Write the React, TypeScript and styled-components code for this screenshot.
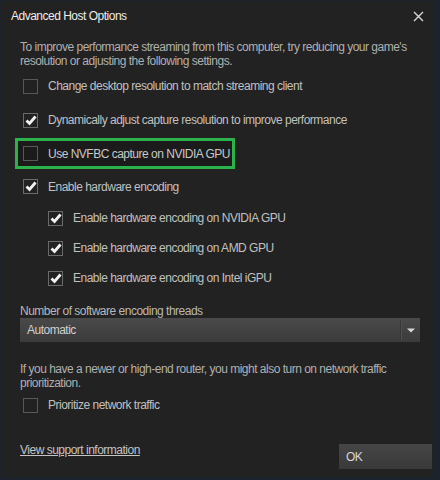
import React from "react";
import styled, { createGlobalStyle } from "styled-components";

const Global = createGlobalStyle`
  html, body { margin: 0; padding: 0; background: #1c232c; }
  body { font-family: "Liberation Sans", Arial, sans-serif; }
  * { box-sizing: border-box; }
`;

const Window = styled.div`
  width: 431px;
  height: 476px;
  margin: 1px 7px 3px 2px;
  background: #222222;
  display: flex;
  flex-direction: column;
  font-size: 12px;
  letter-spacing: -0.5px;
  color: #b4b4b4;
  overflow: hidden;
`;

const TitleBar = styled.div`
  flex: none;
  height: 30px;
  display: flex;
  align-items: center;
  justify-content: space-between;
  padding: 0 8px 0 9px;
  color: #ececec;
  font-size: 12px;
`;

const Close = styled.div`
  width: 14px;
  height: 14px;
  display: flex;
  align-items: center;
  justify-content: center;
`;

const Body = styled.div`
  flex: 1;
  display: flex;
  flex-direction: column;
  padding: 9px 0 0 18px;
`;

const Para = styled.p`
  margin: 0;
  line-height: 14px;
  width: 405px;
  color: #b0b0b0;
`;

const Row = styled.div<{ $indent?: boolean; $h: number }>`
  flex: none;
  display: flex;
  align-items: center;
  height: ${(p) => p.$h}px;
  padding-left: ${(p) => (p.$indent ? 28 : 3)}px;
  color: #c0c0c0;
`;

const Highlight = styled.div`
  flex: none;
  display: flex;
  align-items: center;
  width: 220px;
  height: 31px;
  margin: 2px 0 1px -5px;
  padding-left: 5px;
  border: 3px solid #2bb24a;
  background: #1b1b1b;
  color: #c8c8c8;
`;

const Box = styled.span<{ $checked?: boolean }>`
  width: 15px;
  height: 15px;
  border: 1px solid ${(p) => (p.$checked ? "#6a6a6a" : "#585858")};
  margin-right: 10px;
  display: flex;
  align-items: center;
  justify-content: center;
  flex: none;
`;

const Label = styled.div`
  margin: 11px 0 0 0;
  color: #b8b8b8;
  line-height: 14px;
`;

const Select = styled.div`
  flex: none;
  width: 400px;
  height: 24px;
  display: flex;
  align-items: center;
  background: linear-gradient(#4a4a4a, #3b3b3b);
  color: #d0d0d0;
`;

const SelectText = styled.span`
  flex: 1;
  padding-left: 7px;
`;

const Arrow = styled.span`
  width: 20px;
  height: 20px;
  border-left: 1px solid #383838;
  box-shadow: inset 1px 0 0 #505050;
  display: flex;
  align-items: center;
  justify-content: center;
`;

const Para2 = styled(Para)`
  margin-top: 20px;
`;

const Footer = styled.div`
  display: flex;
  justify-content: space-between;
  align-items: flex-start;
  margin-top: 20px;
  padding-right: 1px;
`;

const Link = styled.a`
  color: #c4c4c4;
  text-decoration: underline;
  margin-top: 3px;
  cursor: pointer;
`;

const Ok = styled.button`
  width: 93px;
  height: 25px;
  margin-top: 4px;
  border: none;
  background: linear-gradient(#464646, #393939);
  color: #d8d8d8;
  font-family: inherit;
  font-size: 12px;
  letter-spacing: -0.5px;
  text-align: left;
  padding-left: 7px;
`;

const Check = () => (
  <svg width="12" height="11" viewBox="0 0 12 11">
    <path d="M1.5 5.5 L4.5 8.5 L10.5 1.5" fill="none" stroke="#f2f2f2" strokeWidth="2.8" />
  </svg>
);

const CheckBox = ({ checked }: { checked?: boolean }) => (
  <Box $checked={checked}>{checked && <Check />}</Box>
);

export default function App() {
  return (
    <>
      <Global />
      <Window>
        <TitleBar>
          <span>Advanced Host Options</span>
          <Close>
            <svg width="11" height="11" viewBox="0 0 11 11">
              <path d="M1 1 L10 10 M10 1 L1 10" stroke="#d8d8d8" strokeWidth="1.4" />
            </svg>
          </Close>
        </TitleBar>
        <Body>
          <Para>
            To improve performance streaming from this computer, try reducing your game's resolution or
            adjusting the following settings.
          </Para>
          <Row $h={36}>
            <CheckBox />
            Change desktop resolution to match streaming client
          </Row>
          <Row $h={32}>
            <CheckBox checked />
            Dynamically adjust capture resolution to improve performance
          </Row>
          <Highlight>
            <CheckBox />
            Use NVFBC capture on NVIDIA GPU
          </Highlight>
          <Row $h={33}>
            <CheckBox checked />
            Enable hardware encoding
          </Row>
          <Row $h={30} $indent>
            <CheckBox checked />
            Enable hardware encoding on NVIDIA GPU
          </Row>
          <Row $h={30} $indent>
            <CheckBox checked />
            Enable hardware encoding on AMD GPU
          </Row>
          <Row $h={30} $indent>
            <CheckBox checked />
            Enable hardware encoding on Intel iGPU
          </Row>
          <Label>Number of software encoding threads</Label>
          <Select>
            <SelectText>Automatic</SelectText>
            <Arrow>
              <svg width="8" height="5" viewBox="0 0 8 5">
                <path d="M0 0.5 H8 L4 4.5 Z" fill="#d8d8d8" />
              </svg>
            </Arrow>
          </Select>
          <Para2>
            If you have a newer or high-end router, you might also turn on network traffic prioritization.
          </Para2>
          <Row $h={30}>
            <CheckBox />
            Prioritize network traffic
          </Row>
          <Footer>
            <Link>View support information</Link>
            <Ok>OK</Ok>
          </Footer>
        </Body>
      </Window>
    </>
  );
}
